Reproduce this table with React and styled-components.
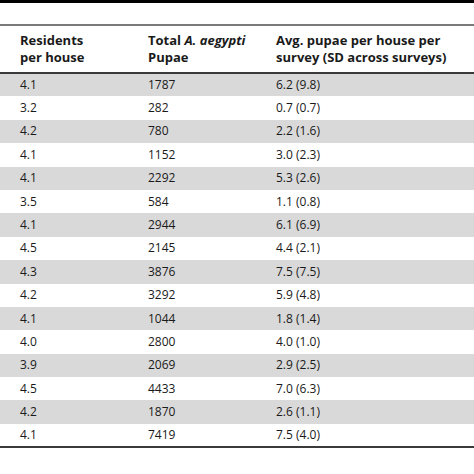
import styled, { createGlobalStyle } from "styled-components";

const GlobalStyle = createGlobalStyle`
  html, body {
    margin: 0;
    padding: 0;
    background: #ffffff;
  }
  body {
    font-family: "Open Sans", "Noto Sans", sans-serif;
    color: #1a1a1a;
  }
`;

const Page = styled.div`
  width: 474px;
  height: 474px;
  background: #fff;
  overflow: hidden;
`;

const TopRule = styled.div`
  height: 3px;
  background: #000;
`;

const Caption = styled.div`
  height: 21px;
  border-bottom: 2px solid #7a7a7a;
`;

const Table = styled.table`
  width: 100%;
  table-layout: fixed;
  border-collapse: collapse;
  font-size: 12px;
  border-bottom: 2px solid #3a3a3a;
`;

const HeadCell = styled.th`
  text-align: left;
  font-weight: 700;
  font-size: 13px;
  line-height: 17px;
  vertical-align: middle;
  height: 46px;
  padding: 0 0 0 ${(p) => p.$pad || 0}px;
  width: ${(p) => (p.$w ? `${p.$w}px` : "auto")};
  border-bottom: 2px solid #3a3a3a;
  color: #1a1a1a;
  white-space: nowrap;
`;

const HeadLine = styled.span`
  display: block;
`;

const Row = styled.tr`
  background: ${(p) => (p.$shade ? "#d9d9d9" : "#ffffff")};
  height: 23.4px;
`;

const Cell = styled.td`
  padding: 0 0 0 ${(p) => p.$pad || 0}px;
  vertical-align: middle;
  line-height: 16px;
`;

const rows = [
  ["4.1", "1787", "6.2 (9.8)"],
  ["3.2", "282", "0.7 (0.7)"],
  ["4.2", "780", "2.2 (1.6)"],
  ["4.1", "1152", "3.0 (2.3)"],
  ["4.1", "2292", "5.3 (2.6)"],
  ["3.5", "584", "1.1 (0.8)"],
  ["4.1", "2944", "6.1 (6.9)"],
  ["4.5", "2145", "4.4 (2.1)"],
  ["4.3", "3876", "7.5 (7.5)"],
  ["4.2", "3292", "5.9 (4.8)"],
  ["4.1", "1044", "1.8 (1.4)"],
  ["4.0", "2800", "4.0 (1.0)"],
  ["3.9", "2069", "2.9 (2.5)"],
  ["4.5", "4433", "7.0 (6.3)"],
  ["4.2", "1870", "2.6 (1.1)"],
  ["4.1", "7419", "7.5 (4.0)"],
];

export default function App() {
  return (
    <Page>
      <GlobalStyle />
      <TopRule />
      <Caption />
      <Table>
        <thead>
          <tr>
            <HeadCell $pad={20} $w={128}>
              <HeadLine>Residents</HeadLine>
              <HeadLine>per house</HeadLine>
            </HeadCell>
            <HeadCell $w={128}>
              <HeadLine>
                Total <i>A. aegypti</i>
              </HeadLine>
              <HeadLine>Pupae</HeadLine>
            </HeadCell>
            <HeadCell>
              <HeadLine>Avg. pupae per house per</HeadLine>
              <HeadLine>survey (SD across surveys)</HeadLine>
            </HeadCell>
          </tr>
        </thead>
        <tbody>
          {rows.map((r, i) => (
            <Row key={i} $shade={i % 2 === 0}>
              <Cell $pad={20}>{r[0]}</Cell>
              <Cell>{r[1]}</Cell>
              <Cell>{r[2]}</Cell>
            </Row>
          ))}
        </tbody>
      </Table>
    </Page>
  );
}
